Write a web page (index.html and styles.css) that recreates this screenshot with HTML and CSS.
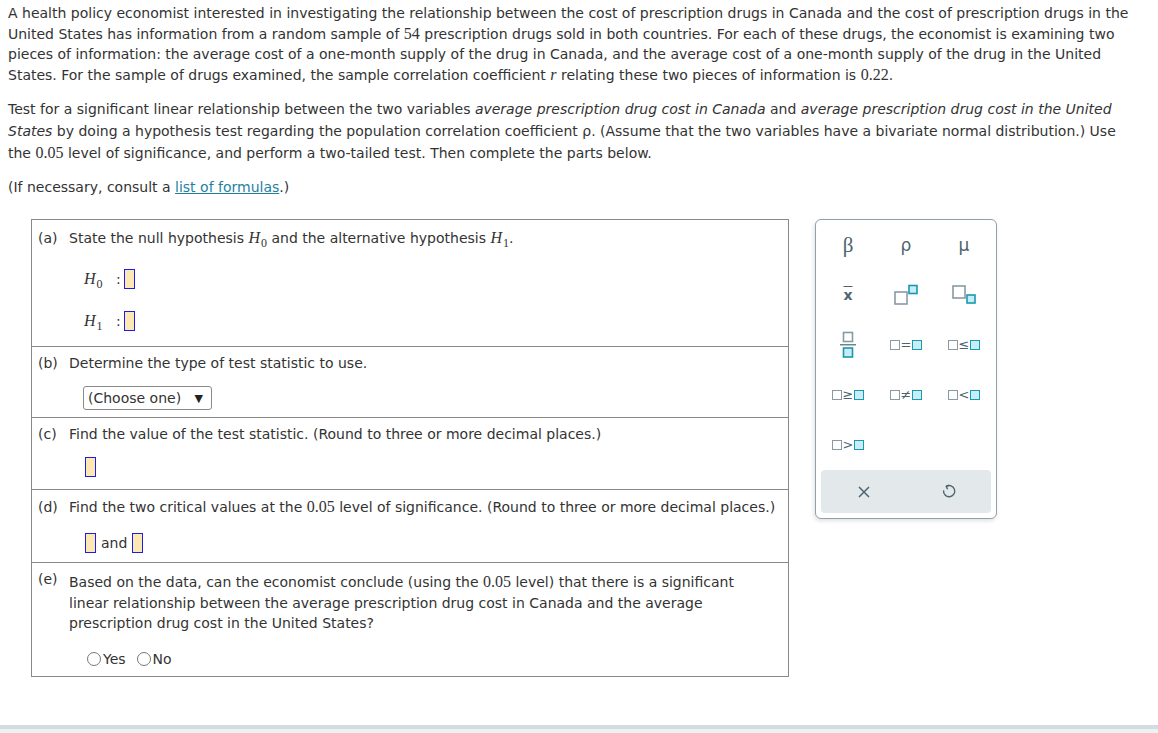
FILE: index.html
```html
<!DOCTYPE html>
<html lang="en">
<head>
<meta charset="utf-8">
<title>Correlation hypothesis test</title>
<link rel="stylesheet" href="styles.css">
</head>
<body>
<div class="page">
  <div class="content">
    <p class="intro">A health policy economist interested in investigating the relationship between the cost of prescription drugs in Canada and the cost of prescription drugs in the United States has information from a random sample of <span class="num">54</span> prescription drugs sold in both countries. For each of these drugs, the economist is examining two pieces of information: the average cost of a one-month supply of the drug in Canada, and the average cost of a one-month supply of the drug in the United States. For the sample of drugs examined, the sample correlation coefficient <span class="var">r</span> relating these two pieces of information is <span class="num">0.22</span>.</p>
    <p class="intro second">Test for a significant linear relationship between the two variables <i>average prescription drug cost in Canada</i> and <i>average prescription drug cost in the United States</i> by doing a hypothesis test regarding the population correlation coefficient ρ. (Assume that the two variables have a bivariate normal distribution.) Use the <span class="num">0.05</span> level of significance, and perform a two-tailed test. Then complete the parts below.</p>
    <p class="note">(If necessary, consult a <a class="link" href="#">list of formulas</a>.)</p>

    <div class="work">
      <div class="qbox">
        <div class="part part-a">
          <div class="label">(a)</div>
          <div class="body">
            <div class="title">State the null hypothesis <span class="mvar">H<sub>0</sub></span> and the alternative hypothesis <span class="mvar">H<sub>1</sub></span>.</div>
            <div class="hyps">
              <div class="hyp"><span class="mvar hv">H<sub>0</sub></span><span class="colon">:</span><span class="ans"></span></div>
              <div class="hyp"><span class="mvar hv">H<sub>1</sub></span><span class="colon">:</span><span class="ans"></span></div>
            </div>
          </div>
        </div>
        <div class="part part-b">
          <div class="label">(b)</div>
          <div class="body">
            <div class="title">Determine the type of test statistic to use.</div>
            <div class="select"><span>(Choose one)</span><span class="arrow">▼</span></div>
          </div>
        </div>
        <div class="part part-c">
          <div class="label">(c)</div>
          <div class="body">
            <div class="title">Find the value of the test statistic. (Round to three or more decimal places.)</div>
            <div class="answers"><span class="ans"></span></div>
          </div>
        </div>
        <div class="part part-d">
          <div class="label">(d)</div>
          <div class="body">
            <div class="title">Find the two critical values at the <span class="num">0.05</span> level of significance. (Round to three or more decimal places.)</div>
            <div class="answers"><span class="ans"></span><span class="and">and</span><span class="ans"></span></div>
          </div>
        </div>
        <div class="part part-e">
          <div class="label label-e">(e)</div>
          <div class="body">
            <div class="title">Based on the data, can the economist conclude (using the <span class="num">0.05</span> level) that there is a significant linear relationship between the average prescription drug cost in Canada and the average prescription drug cost in the United States?</div>
            <div class="radios">
              <span class="radio"><span class="circle"></span>Yes</span>
              <span class="radio"><span class="circle"></span>No</span>
            </div>
          </div>
        </div>
      </div>

      <div class="palette">
        <div class="grid">
          <div class="key"><span class="greek beta">β</span></div>
          <div class="key"><span class="greek">ρ</span></div>
          <div class="key"><span class="greek">μ</span></div>

          <div class="key"><span class="xbar">x</span></div>
          <div class="key">
            <svg width="26" height="22" viewBox="0 0 26 22"><rect x="2" y="8" width="12" height="12" fill="#fff" stroke="#8a9aa3" stroke-width="1.6"/><rect x="16" y="1.5" width="8" height="8" fill="#c8edf4" stroke="#1898b1" stroke-width="1.6"/></svg>
          </div>
          <div class="key">
            <svg width="26" height="22" viewBox="0 0 26 22"><rect x="2" y="2" width="12" height="12" fill="#fff" stroke="#8a9aa3" stroke-width="1.6"/><rect x="16" y="11" width="8" height="8" fill="#c8edf4" stroke="#1898b1" stroke-width="1.6"/></svg>
          </div>

          <div class="key">
            <svg width="18" height="28" viewBox="0 0 18 28"><rect x="4.5" y="1.5" width="9" height="9" fill="#fff" stroke="#8a9aa3" stroke-width="1.6"/><line x1="1" y1="13.8" x2="17" y2="13.8" stroke="#4d6470" stroke-width="1.2"/><rect x="4.5" y="17" width="9" height="9" fill="#c8edf4" stroke="#1898b1" stroke-width="1.6"/></svg>
          </div>
          <div class="key"><span class="rel"><span class="bx"></span><span class="op">=</span><span class="bx t"></span></span></div>
          <div class="key"><span class="rel"><span class="bx"></span><span class="op">≤</span><span class="bx t"></span></span></div>

          <div class="key"><span class="rel"><span class="bx"></span><span class="op">≥</span><span class="bx t"></span></span></div>
          <div class="key"><span class="rel"><span class="bx"></span><span class="op">≠</span><span class="bx t"></span></span></div>
          <div class="key"><span class="rel"><span class="bx"></span><span class="op">&lt;</span><span class="bx t"></span></span></div>

          <div class="key"><span class="rel"><span class="bx"></span><span class="op">&gt;</span><span class="bx t"></span></span></div>
          <div class="key"></div>
          <div class="key"></div>
        </div>
        <div class="actions">
          <div class="action">
            <svg width="14" height="14" viewBox="0 0 14 14"><path d="M2 2 L12 12 M12 2 L2 12" stroke="#4d6470" stroke-width="1.5" fill="none"/></svg>
          </div>
          <div class="action">
            <svg width="16" height="16" viewBox="0 0 16 16"><path d="M5.2 2.4 A5.6 5.6 0 1 1 2.6 6.4" stroke="#4d6470" stroke-width="1.4" fill="none"/><path d="M8.2 1.2 L5.2 2.4 L6.6 5.2" stroke="#4d6470" stroke-width="1.4" fill="none" stroke-linejoin="round"/></svg>
          </div>
        </div>
      </div>
    </div>
  </div>
  <div class="footer"></div>
</div>
</body>
</html>
```

FILE: styles.css
```css
html, body {
  margin: 0;
  padding: 0;
  background: #fff;
}

.page {
  min-height: 733px;
  display: flex;
  flex-direction: column;
  font-family: Verdana, "DejaVu Sans", sans-serif;
  font-size: 14px;
  letter-spacing: 0;
  color: #333;
}

.content {
  padding: 3px 8px 0 8px;
  flex: 1;
}

p {
  margin: 0;
}

.intro {
  line-height: 20.6px;
}

.intro.second {
  margin-top: 13px;
  line-height: 22px;
  max-width: 1124px;
}

.note {
  margin-top: 13px;
  line-height: 20px;
}

.num {
  font-family: "Liberation Serif", "Times New Roman", serif;
  font-size: 16px;
  line-height: 1;
}

.var {
  font-family: "Liberation Serif", "Times New Roman", serif;
  font-style: italic;
  font-size: 16px;
  line-height: 1;
}

.link {
  color: #1f7fa3;
  text-decoration: underline;
}

.work {
  display: flex;
  align-items: flex-start;
  gap: 26px;
  margin-top: 22px;
  margin-left: 23px;
}

.qbox {
  width: 756px;
  border: 1px solid #888;
}

.part {
  display: flex;
  padding: 0 0 0 6px;
}

.part + .part {
  border-top: 1px solid #888;
}

.label {
  width: 31px;
  flex: none;
  line-height: 20px;
}

.label-e {
  margin-top: -3px;
}

.body {
  flex: 1;
}

.title {
  line-height: 20px;
}

.mvar {
  font-family: "Liberation Serif", "Times New Roman", serif;
  font-style: italic;
  font-size: 16px;
  line-height: 1;
}

.mvar sub {
  font-style: normal;
  font-size: 12px;
  line-height: 0;
  vertical-align: -4px;
  margin-left: 1px;
}

.part-a {
  padding-top: 8px;
  padding-bottom: 4px;
}

.hyps {
  margin-top: 10px;
  padding-left: 15px;
}

.hyp {
  height: 42px;
  display: flex;
  align-items: center;
}

.hv {
  width: 32px;
}

.colon {
  font-size: 14px;
  margin-right: 3px;
}

.ans {
  display: inline-block;
  width: 9px;
  height: 18px;
  background: #fde8b3;
  border: 1px solid #1c1cf0;
}

.part-b {
  padding-top: 6px;
  padding-bottom: 7px;
}

.select {
  margin-top: 13px;
  margin-left: 14px;
  border: 1px solid #8a8a8a;
  border-radius: 3px;
  display: flex;
  align-items: center;
  justify-content: space-between;
  padding: 0 8px 0 4px;
  box-sizing: border-box;
  width: 129px;
  height: 24px;
  font-size: 14px;
  color: #333;
}

.arrow {
  font-size: 11px;
  color: #222;
}

.part-c {
  padding-top: 6px;
  padding-bottom: 12px;
}

.answers {
  margin-top: 13px;
  padding-left: 16px;
  height: 20px;
  display: flex;
  align-items: center;
  gap: 5px;
}

.part-d {
  padding-top: 7px;
  padding-bottom: 9px;
}

.part-d .answers {
  margin-top: 16px;
}

.and {
  font-size: 14px;
}

.part-e {
  padding-top: 9px;
  padding-bottom: 7px;
}

.part-e .title {
  line-height: 20.5px;
  max-width: 680px;
}

.radios {
  margin-top: 15px;
  padding-left: 18px;
  height: 20px;
  display: flex;
  align-items: center;
  gap: 11px;
}

.radio {
  display: inline-flex;
  align-items: center;
  gap: 2px;
}

.circle {
  display: inline-block;
  width: 12px;
  height: 12px;
  border: 1px solid #777;
  border-radius: 50%;
  background: #fff;
}

.palette {
  width: 182px;
  box-sizing: border-box;
  border: 1px solid #8fa2ab;
  border-radius: 6px;
  box-shadow: -1px 2px 4px rgba(0, 0, 0, 0.12);
  padding: 0 3px 5px 3px;
  background: #fff;
}

.grid {
  display: grid;
  grid-template-columns: repeat(3, 58px);
  grid-auto-rows: 50px;
}

.key {
  display: flex;
  align-items: center;
  justify-content: center;
  color: #4d6470;
}

.greek {
  font-family: "DejaVu Sans", sans-serif;
  font-size: 17px;
  color: #4d6470;
}

.beta {
  font-family: "Liberation Serif", serif;
  font-size: 21px;
}

.xbar {
  font-family: "DejaVu Sans", sans-serif;
  font-weight: bold;
  font-size: 14px;
  text-decoration: overline;
  color: #4d6470;
}

.rel {
  display: inline-flex;
  align-items: center;
  gap: 1px;
}

.bx {
  display: inline-block;
  width: 8px;
  height: 8px;
  border: 1.6px solid #8a9aa3;
  background: #fff;
}

.bx.t {
  border-color: #1898b1;
  background: #c8edf4;
}

.op {
  font-family: "DejaVu Sans", sans-serif;
  font-size: 13px;
  color: #4d6470;
  line-height: 12px;
}

.actions {
  display: flex;
  height: 43px;
  margin: 0 2px;
  background: #e3e9eb;
  border-radius: 4px;
}

.action {
  flex: 1;
  display: flex;
  align-items: center;
  justify-content: center;
}

.footer {
  height: 8px;
  background: #eef2f3;
  border-top: 4px solid #d3dcdf;
  box-sizing: border-box;
}
```
